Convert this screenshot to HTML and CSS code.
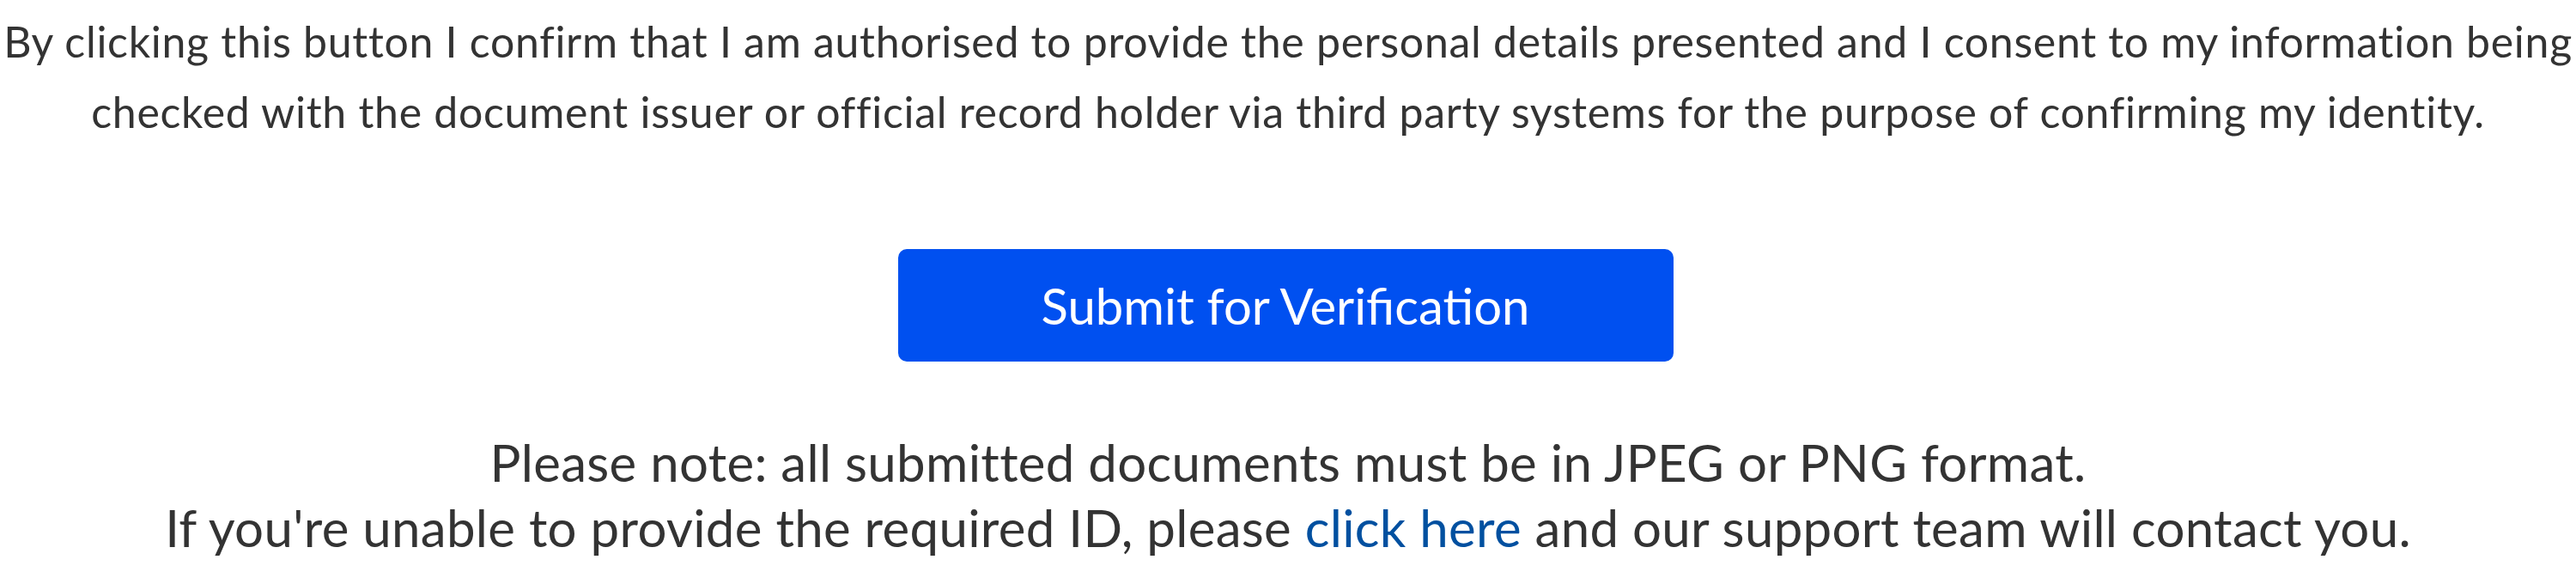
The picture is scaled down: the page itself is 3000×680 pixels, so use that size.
FILE: index.html
```html
<!DOCTYPE html>
<html lang="en">
<head>
  <meta charset="UTF-8">
  <title>Submit for Verification</title>
  <meta name="viewport" content="width=device-width, initial-scale=1.0">
  <link rel="stylesheet" href="styles.css">
</head>
<body>

  <div class="verify">
    <p class="consent">By clicking this button I confirm that I am authorised to provide the personal details presented and I consent to my information being checked with the document issuer or official record holder via third party systems for the purpose of confirming my identity.</p>

    <div class="actions">
      <button class="submit-btn" type="button">Submit for Verification</button>
    </div>

    <div class="note">
      <p>Please note: all submitted documents must be in JPEG or PNG format.</p>
      <p>If you're unable to provide the required ID, please <a href="#">click here</a> and our support team will contact you.</p>
    </div>
  </div>

</body>
</html>
```

FILE: styles.css
```css
body {
  margin: 0;
  padding: 0;
  background: #fff;
  font-family: 'Lato', 'Open Sans', sans-serif;
  color: #333;
}
.verify {
  width: 3000px;
  text-align: center;
}
.consent {
  margin: 0;
  padding-top: 7px;
  font-size: 50px;
  line-height: 82px;
  letter-spacing: 0.7px;
}
.actions {
  margin-top: 119px;
  padding-right: 6px;
}
.submit-btn {
  width: 903px;
  height: 131px;
  padding: 0;
  font-family: inherit;
  font-size: 58px;
  color: #fff;
  background-color: #0050f0;
  border: none;
  border-radius: 10px;
  cursor: pointer;
}
.submit-btn:hover {
  background-color: #0444c8;
}
.note {
  margin-top: 79px;
  font-size: 60px;
  line-height: 76px;
  letter-spacing: 0.3px;
}
.note p {
  margin: 0;
}
.note a {
  color: #0050a0;
  text-decoration: none;
}
```
